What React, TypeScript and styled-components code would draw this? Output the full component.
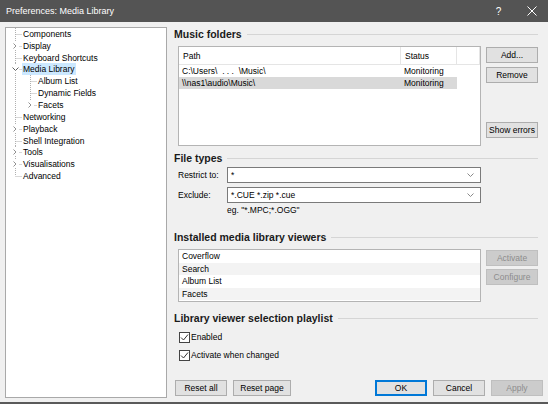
import React from "react";
import styled, { createGlobalStyle } from "styled-components";

const GlobalStyle = createGlobalStyle`
  html, body {
    margin: 0;
    padding: 0;
    background: #f0f0f0;
    overflow: hidden;
  }
  body {
    font-family: "Liberation Sans", Arial, sans-serif;
    font-size: 8.5px;
    color: #000;
  }
`;

const Window = styled.div`
  width: 548px;
  height: 404px;
  display: flex;
  flex-direction: column;
  background: #f0f0f0;
  box-sizing: border-box;
  border-bottom: 2px solid #5a5a5a;
`;

const TitleBar = styled.div`
  height: 22px;
  flex: none;
  background: #545454;
  color: #fff;
  display: flex;
  align-items: center;
  padding-left: 6px;
  font-size: 9px;
`;

const TitleText = styled.span`
  flex: 1;
`;

const TitleButton = styled.div`
  width: 33px;
  height: 22px;
  display: flex;
  align-items: center;
  justify-content: center;
  color: #fff;
  font-size: 10px;
`;

const Body = styled.div`
  flex: 1;
  display: flex;
  padding: 5px 0 0 5px;
  gap: 7px;
`;

const TreePanel = styled.div`
  width: 162px;
  height: 371px;
  box-sizing: border-box;
  border: 1px solid #a9a9a9;
  background: #fff;
  padding-left: 1px;
`;

const TreeRow = styled.div`
  height: 11.85px;
  display: flex;
  align-items: center;
  white-space: nowrap;
  overflow: visible;
`;

const TreeLabel = styled.span<{ $selected?: boolean }>`
  padding: 0 1px;
  line-height: 12px;
  background: ${(p) => (p.$selected ? "#cce8ff" : "transparent")};
`;

const RightColumn = styled.div`
  width: 369px;
  display: flex;
  flex-direction: column;
`;

const SectionHeader = styled.div<{ $top: number }>`
  height: 14px;
  margin-top: ${(p) => p.$top}px;
  margin-right: 5px;
  display: flex;
  align-items: center;
  gap: 5px;
  font-size: 10.5px;
  font-weight: bold;
  color: #1a1a1a;
  &::after {
    content: "";
    flex: 1;
    height: 1px;
    background: #d5d5d5;
    margin-top: 1px;
  }
`;

const ListRow = styled.div<{ $top: number }>`
  display: flex;
  gap: 5px;
  margin-top: ${(p) => p.$top}px;
  margin-left: 4px;
`;

const ListBox = styled.div<{ $height: number }>`
  width: 303px;
  height: ${(p) => p.$height}px;
  box-sizing: border-box;
  border: 1px solid #b4b4b4;
  background: #fff;
`;

const Table = styled.div`
  display: grid;
  grid-template-columns: 222px 56px 1fr;
`;

const HeaderCell = styled.div`
  height: 18px;
  box-sizing: border-box;
  border-right: 1px solid #e5e5e5;
  border-bottom: 1px solid #e5e5e5;
  padding-left: 4px;
  display: flex;
  align-items: center;
`;

const Cell = styled.div<{ $selected?: boolean; $blank?: boolean }>`
  height: 12px;
  line-height: 12px;
  padding-left: ${(p) => (p.$blank ? 0 : 3)}px;
  white-space: pre;
  background: ${(p) => (p.$selected && !p.$blank ? "#d9d9d9" : "transparent")};
`;

const ViewerItem = styled.div<{ $alt: boolean }>`
  height: 12.5px;
  line-height: 12.5px;
  padding-left: 3px;
  background: ${(p) => (p.$alt ? "#f3f3f3" : "#fff")};
`;

const ButtonStack = styled.div`
  width: 52px;
  display: flex;
  flex-direction: column;
`;

const Button = styled.button<{ $disabled?: boolean; $focused?: boolean; $width?: number; $top?: number }>`
  width: ${(p) => p.$width ?? 52}px;
  height: 16px;
  margin-top: ${(p) => p.$top ?? 0}px;
  box-sizing: border-box;
  padding: 0;
  font-family: inherit;
  font-size: 8.5px;
  background: ${(p) => (p.$disabled ? "#cccccc" : "#e1e1e1")};
  color: ${(p) => (p.$disabled ? "#8c8c8c" : "#000")};
  border: 1px solid
    ${(p) => (p.$focused ? "#0078d7" : p.$disabled ? "#bfbfbf" : "#adadad")};
  box-shadow: ${(p) => (p.$focused ? "inset 0 0 0 1px #0078d7" : "none")};
  flex: none;
`;

const FieldRow = styled.div<{ $top: number }>`
  display: flex;
  align-items: center;
  margin-top: ${(p) => p.$top}px;
  margin-left: 4px;
`;

const FieldLabel = styled.span`
  width: 49px;
`;

const Combo = styled.div`
  width: 254px;
  height: 16px;
  box-sizing: border-box;
  border: 1px solid #7a7a7a;
  background: #fff;
  display: flex;
  align-items: center;
  padding: 0 6px 0 3px;
`;

const ComboText = styled.span`
  flex: 1;
`;

const Hint = styled.div`
  margin-left: 53px;
  margin-top: 1px;
  height: 12px;
  line-height: 12px;
`;

const CheckRow = styled.label<{ $top: number }>`
  display: flex;
  align-items: center;
  gap: 1px;
  height: 12px;
  margin-top: ${(p) => p.$top}px;
  margin-left: 5px;
`;

const CheckBox = styled.span`
  width: 11px;
  height: 11px;
  box-sizing: border-box;
  border: 1px solid #444;
  background: #fff;
  display: flex;
  align-items: center;
  justify-content: center;
`;

const BottomBar = styled.div`
  display: flex;
  margin-top: 19px;
  margin-left: 1px;
  gap: 6px;
`;

const Spacer = styled.div`
  flex: 1;
`;

type Line = "mid" | "last" | "pass" | "none";

const Gutter = ({ line, arrow }: { line: Line; arrow?: "right" | "down" }) => {
  const x = 8.5;
  return (
    <svg width="15" height="12" viewBox="0 0 15 12" style={{ flex: "none" }}>
      {line !== "none" && (
        <g stroke="#b0b0b0" strokeWidth="1" strokeDasharray="1 1">
          <line x1={x} y1="0" x2={x} y2={line === "last" ? 6 : 12} />
          {line !== "pass" && <line x1={x} y1="6.5" x2="15" y2="6.5" />}
        </g>
      )}
      {arrow && <rect x="5" y="2" width="7" height="8" fill="#fff" />}
      {arrow === "right" && (
        <polyline points="6.5,3.5 9,6 6.5,8.5" fill="none" stroke="#909090" strokeWidth="1" />
      )}
      {arrow === "down" && (
        <polyline points="5.5,4.5 8.5,7.5 11.5,4.5" fill="none" stroke="#606060" strokeWidth="1" />
      )}
    </svg>
  );
};

type Node = { label: string; gutters: Line[]; arrow?: "right" | "down"; selected?: boolean };

const tree: Node[] = [
  { label: "Components", gutters: ["mid"] },
  { label: "Display", gutters: ["mid"], arrow: "right" },
  { label: "Keyboard Shortcuts", gutters: ["mid"] },
  { label: "Media Library", gutters: ["mid"], arrow: "down", selected: true },
  { label: "Album List", gutters: ["pass", "mid"] },
  { label: "Dynamic Fields", gutters: ["pass", "mid"] },
  { label: "Facets", gutters: ["pass", "last"], arrow: "right" },
  { label: "Networking", gutters: ["mid"] },
  { label: "Playback", gutters: ["mid"], arrow: "right" },
  { label: "Shell Integration", gutters: ["mid"] },
  { label: "Tools", gutters: ["mid"], arrow: "right" },
  { label: "Visualisations", gutters: ["mid"], arrow: "right" },
  { label: "Advanced", gutters: ["last"] },
];

const Chevron = () => (
  <svg width="7" height="4" viewBox="0 0 7 4">
    <polyline points="0.5,0.5 3.5,3.5 6.5,0.5" fill="none" stroke="#8a8a8a" strokeWidth="1" />
  </svg>
);

const Check = () => (
  <svg width="9" height="9" viewBox="0 0 9 9">
    <polyline points="1,4.5 3.5,7 8,1.5" fill="none" stroke="#333" strokeWidth="1" />
  </svg>
);

const folders = [
  { path: "C:\\Users\\  . . .  \\Music\\", status: "Monitoring", selected: false },
  { path: "\\\\nas1\\audio\\Music\\", status: "Monitoring", selected: true },
];

const viewers = ["Coverflow", "Search", "Album List", "Facets"];

const App = () => (
  <>
    <GlobalStyle />
    <Window>
      <TitleBar>
        <TitleText>Preferences: Media Library</TitleText>
        <TitleButton>?</TitleButton>
        <TitleButton>
          <svg width="10" height="10" viewBox="0 0 10 10">
            <path d="M0.5 0.5 L9.5 9.5 M9.5 0.5 L0.5 9.5" stroke="#fff" strokeWidth="1" />
          </svg>
        </TitleButton>
      </TitleBar>
      <Body>
        <TreePanel>
          {tree.map((n) => (
            <TreeRow key={n.label}>
              {n.gutters.map((g, i) => (
                <Gutter key={i} line={g} arrow={i === n.gutters.length - 1 ? n.arrow : undefined} />
              ))}
              <TreeLabel $selected={n.selected}>{n.label}</TreeLabel>
            </TreeRow>
          ))}
        </TreePanel>
        <RightColumn>
          <SectionHeader $top={0}>Music folders</SectionHeader>
          <ListRow $top={5}>
            <ListBox $height={100}>
              <Table>
                <HeaderCell>Path</HeaderCell>
                <HeaderCell>Status</HeaderCell>
                <HeaderCell />
                {folders.map((f) => (
                  <React.Fragment key={f.path}>
                    <Cell $selected={f.selected}>{f.path}</Cell>
                    <Cell $selected={f.selected}>{f.status}</Cell>
                    <Cell $blank />
                  </React.Fragment>
                ))}
              </Table>
            </ListBox>
            <ButtonStack>
              <Button $top={1}>Add...</Button>
              <Button $top={4}>Remove</Button>
              <Button $top={39}>Show errors</Button>
            </ButtonStack>
          </ListRow>

          <SectionHeader $top={5}>File types</SectionHeader>
          <FieldRow $top={2}>
            <FieldLabel>Restrict to:</FieldLabel>
            <Combo>
              <ComboText>*</ComboText>
              <Chevron />
            </Combo>
          </FieldRow>
          <FieldRow $top={4}>
            <FieldLabel>Exclude:</FieldLabel>
            <Combo>
              <ComboText>*.CUE *.zip *.cue</ComboText>
              <Chevron />
            </Combo>
          </FieldRow>
          <Hint>eg. "*.MPC;*.OGG"</Hint>

          <SectionHeader $top={14}>Installed media library viewers</SectionHeader>
          <ListRow $top={5}>
            <ListBox $height={53}>
              {viewers.map((v, i) => (
                <ViewerItem key={v} $alt={i % 2 === 1}>
                  {v}
                </ViewerItem>
              ))}
            </ListBox>
            <ButtonStack>
              <Button $top={1} $disabled>
                Activate
              </Button>
              <Button $top={3} $disabled>
                Configure
              </Button>
            </ButtonStack>
          </ListRow>

          <SectionHeader $top={9}>Library viewer selection playlist</SectionHeader>
          <CheckRow $top={6}>
            <CheckBox>
              <Check />
            </CheckBox>
            Enabled
          </CheckRow>
          <CheckRow $top={6}>
            <CheckBox>
              <Check />
            </CheckBox>
            Activate when changed
          </CheckRow>

          <BottomBar>
            <Button>Reset all</Button>
            <Button $width={58}>Reset page</Button>
            <Spacer />
            <Button $focused>OK</Button>
            <Button>Cancel</Button>
            <Button $disabled>Apply</Button>
          </BottomBar>
        </RightColumn>
      </Body>
    </Window>
  </>
);

export default App;
